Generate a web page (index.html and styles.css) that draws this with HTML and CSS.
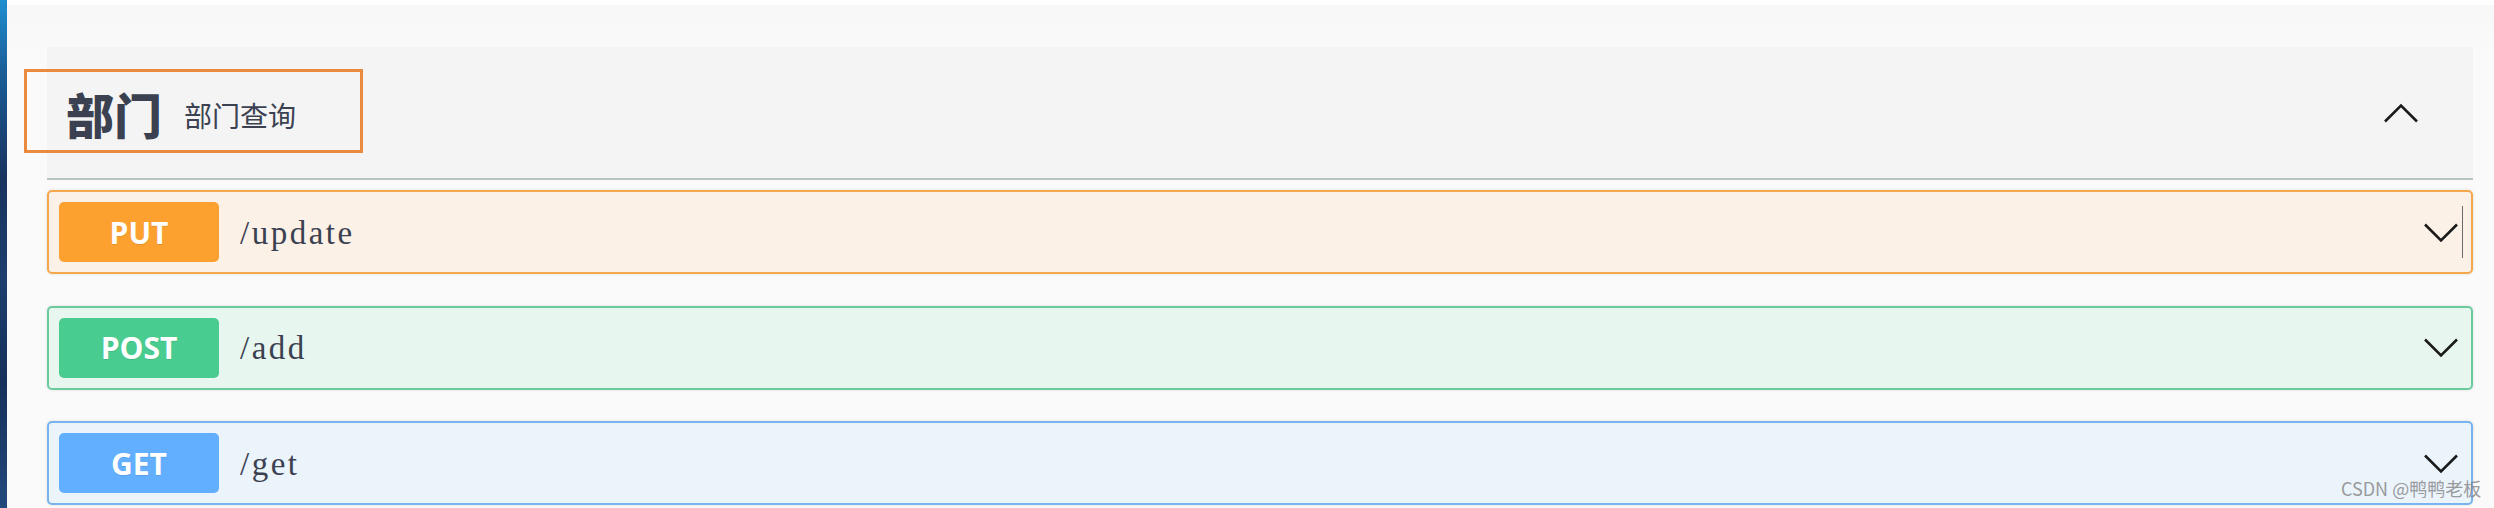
FILE: index.html
```html
<!DOCTYPE html>
<html lang="zh-CN">
<head>
<meta charset="utf-8">
<title>部门</title>
<link rel="stylesheet" href="styles.css">
</head>
<body>
<div class="desk"></div>
<div class="page">
  <div class="topbar"></div>
  <div class="content">
    <section class="tag">
      <div class="tag-head">
        <h3 class="tag-title"><span class="tag-name">部门</span><small class="tag-desc">部门查询</small></h3>
        <svg class="arrow" width="36" height="20" viewBox="0 0 36 20"><polyline points="2,18.5 18,2.5 34,18.5" fill="none" stroke="#1b1b1b" stroke-width="2.6"/></svg>
      </div>
      <div class="ops">
        <div class="op op-put">
          <span class="method">PUT</span>
          <span class="path">/update</span>
          <svg class="arrow" width="36" height="20" viewBox="0 0 36 20"><polyline points="2,1.5 18,17.5 34,1.5" fill="none" stroke="#1b1b1b" stroke-width="2.6"/></svg>
          <span class="caret"></span>
        </div>
        <div class="op op-post">
          <span class="method">POST</span>
          <span class="path">/add</span>
          <svg class="arrow" width="36" height="20" viewBox="0 0 36 20"><polyline points="2,1.5 18,17.5 34,1.5" fill="none" stroke="#1b1b1b" stroke-width="2.6"/></svg>
          <span class="caret"></span>
        </div>
        <div class="op op-get">
          <span class="method">GET</span>
          <span class="path">/get</span>
          <svg class="arrow" width="36" height="20" viewBox="0 0 36 20"><polyline points="2,1.5 18,17.5 34,1.5" fill="none" stroke="#1b1b1b" stroke-width="2.6"/></svg>
          <span class="caret"></span>
        </div>
      </div>
    </section>
  </div>
</div>
<div class="highlight"></div>
<div class="watermark">CSDN @鸭鸭老板</div>
</body>
</html>
```
FILE: styles.css
```css
html, body {
  margin: 0;
  padding: 0;
}
body {
  position: relative;
  width: 2494px;
  height: 508px;
  overflow: hidden;
  display: flex;
  background: #fafafa;
  font-family: "Open Sans", "Noto Sans CJK SC", sans-serif;
  color: #3b4151;
}
.desk {
  width: 7px;
  flex: none;
  background: linear-gradient(180deg, #1f8fd0 0%, #1a5d98 14%, #18335e 35%, #1c3f6e 55%, #16305a 75%, #22497c 100%);
}
.page {
  flex: 1;
  display: flex;
  flex-direction: column;
  background: #fafafa;
}
.topbar {
  height: 5px;
  background: #ffffff;
  box-shadow: 0 1px 3px rgba(0, 0, 0, 0.18);
}
.content {
  padding: 42px 21px 0 40px;
  background: linear-gradient(180deg, #f8f8f8 0, #f9f9f9 40px, #fafafa 42px);
}
.tag-head {
  height: 133px;
  box-sizing: border-box;
  padding: 0 54px 0 19px;
  display: flex;
  align-items: center;
  justify-content: space-between;
  background: #f4f4f4;
  border-bottom: 2px solid #b8c4c0;
}
.tag-title {
  margin: 0;
  display: flex;
  align-items: center;
  font-weight: normal;
}
.tag-name {
  font-family: "Noto Sans CJK SC", sans-serif;
  font-size: 48px;
  font-weight: 900;
  line-height: 1;
  color: #3b4151;
}
.tag-desc {
  margin-left: 22px;
  font-family: "Noto Sans CJK SC", sans-serif;
  font-size: 28px;
  line-height: 1;
  color: #3b4151;
  padding-top: 4px;
}
.arrow {
  display: block;
  flex: none;
}
.ops {
  padding-top: 10px;
  display: flex;
  flex-direction: column;
  gap: 31.5px;
}
.op {
  height: 84px;
  box-sizing: border-box;
  border: 2px solid;
  border-radius: 5px;
  display: flex;
  align-items: center;
  padding: 0 8px 0 10px;
  box-shadow: 0 0 3px rgba(0, 0, 0, 0.12);
}
.op .arrow {
  margin-left: auto;
  margin-top: 1px;
}
.op-put {
  background: #fbf1e6;
  border-color: #f4a74b;
}
.op-post {
  background: #e7f6ef;
  border-color: #6ccb9d;
}
.op-get {
  background: #ebf3fb;
  border-color: #78b4ef;
}
.method {
  width: 160px;
  height: 60px;
  flex: none;
  border-radius: 5px;
  display: flex;
  align-items: center;
  justify-content: center;
  font-family: "Open Sans", sans-serif;
  font-weight: 700;
  font-size: 30px;
  color: #ffffff;
  text-shadow: 0 1px 0 rgba(0, 0, 0, 0.1);
}
.op-put .method { background: #fca130; }
.op-post .method { background: #49cc90; }
.op-get .method { background: #61affe; }
.path {
  margin-left: 21px;
  font-family: "Liberation Serif", serif;
  font-size: 33px;
  letter-spacing: 2.5px;
  color: #3b4151;
  padding-top: 2px;
}
.caret {
  width: 1px;
  height: 52px;
  margin-left: 3px;
  flex: none;
}
.op-put .caret {
  background: #6b6b6b;
}
.highlight {
  position: absolute;
  left: 24px;
  top: 69px;
  width: 339px;
  height: 84px;
  box-sizing: border-box;
  border: 3px solid #ea8a3e;
}
.watermark {
  position: absolute;
  left: 2341px;
  top: 477px;
  font-family: "Noto Sans CJK SC", sans-serif;
  font-size: 18px;
  line-height: 22px;
  color: rgba(130, 130, 130, 0.8);
  white-space: nowrap;
}
```
